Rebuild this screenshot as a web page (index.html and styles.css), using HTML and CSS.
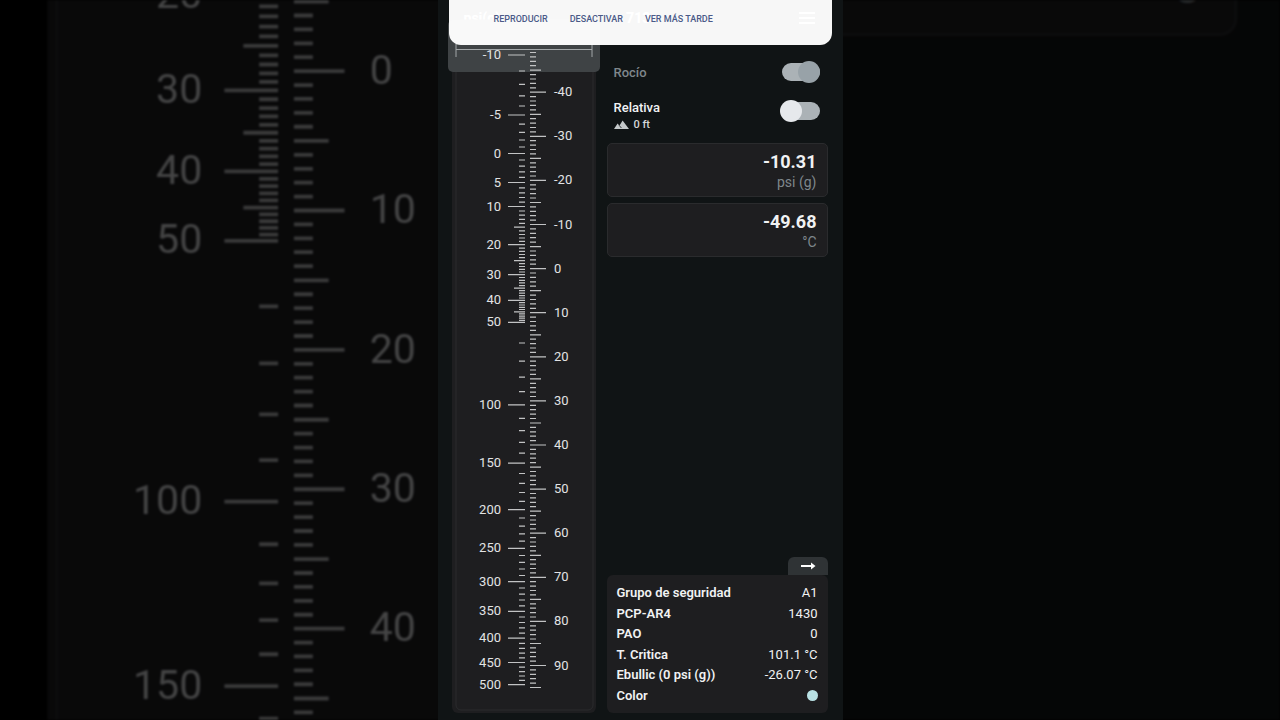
FILE: index.html
```html
<!DOCTYPE html>
<html lang="es">
<head>
  <meta charset="UTF-8" />
  <meta name="viewport" content="width=device-width, initial-scale=1.0"/>
  <title>Regla de refrigerante</title>
  <link rel="stylesheet" href="styles.css">
</head>
<body>

  <svg class="backdrop" viewBox="-1 246 405 228" preserveAspectRatio="xMidYMid slice" aria-hidden="true">
    <rect class="screen-bg" x="14" width="405" height="720"/>
    <rect class="rail-bg" x="14" y="-20" width="144" height="733" rx="6"/>
    <rect class="rail-line" x="17" y="-20" width="137" height="730" rx="5"/>
    <rect class="rail-bg rail-line" x="169" y="204" width="221" height="53" rx="5"/>
    <text class="unit-text" x="379" y="247" text-anchor="end">°C</text>
    <g class="scale" transform="translate(14 0)"></g>
  </svg>

  <main class="phone">
    <header class="topbar">
      <span>psi(g)</span>
      <span>713</span>
      <svg width="16" height="12" viewBox="0 0 16 12">
        <path d="M0 1h16M0 6h16M0 11h16" stroke="#fff" stroke-width="2"/>
      </svg>
    </header>

    <div class="sheet">
      <button>REPRODUCIR</button>
      <button>DESACTIVAR</button>
      <button>VER MÁS TARDE</button>
    </div>

    <div class="content">
      <section class="rail">
        <svg class="ruler" viewBox="0 44 144 669" preserveAspectRatio="xMidYMin meet">
          <rect class="rail-line" x="4" y="20" width="137" height="690" rx="5"/>
          <rect class="cursor" x="-4" y="20" width="152" height="52" rx="5"/>
          <path class="cursor-line" d="M4 44v13M4 49.5h136M140 44v13"/>
          <g class="scale"></g>
        </svg>
      </section>

      <section class="panel">
        <div class="option option-off">
          <label for="rocio">Rocío</label>
          <input class="switch" type="checkbox" id="rocio" checked disabled>
        </div>
        <div class="option">
          <div>
            <label for="relativa">Relativa</label>
            <div class="altitude">
              <svg width="15" height="9" viewBox="0 0 15 9">
                <path d="M0 9L3.6 3.4 5.4 5.8 8.6 0.5 15 9Z" fill="#c4c8ca"/>
                <path d="M5.2 5.4L7.4 8" stroke="#101415" stroke-width="0.8"/>
              </svg>
              <span>0 ft</span>
            </div>
          </div>
          <input class="switch" type="checkbox" id="relativa">
        </div>

        <div class="reading">
          <strong>-10.31</strong>
          <span>psi (g)</span>
        </div>
        <div class="reading">
          <strong>-49.68</strong>
          <span>°C</span>
        </div>

        <div class="info">
          <button class="info-tab" aria-label="Siguiente">
            <svg width="16" height="8" viewBox="0 0 16 8">
              <path d="M1 4h12" stroke="#fff" stroke-width="2"/>
              <path d="M11 0.5L15.5 4 11 7.5Z" fill="#fff"/>
            </svg>
          </button>
          <dl class="info-list">
            <div><dt>Grupo de seguridad</dt><dd>A1</dd></div>
            <div><dt>PCP-AR4</dt><dd>1430</dd></div>
            <div><dt>PAO</dt><dd>0</dd></div>
            <div><dt>T. Critica</dt><dd>101.1 °C</dd></div>
            <div><dt>Ebullic (0 psi (g))</dt><dd>-26.07 °C</dd></div>
            <div><dt>Color</dt><dd><span class="swatch"></span></dd></div>
          </dl>
        </div>
      </section>
    </div>
  </main>

  <script src="script.js"></script>
</body>
</html>
```
FILE: styles.css
```css
:root {
  --screen: #101415;
  --card: #1e1e20;
  --line: #2a2b2d;
  --text: #f1f2f3;
  --muted: #7f878c;
}

* {
  box-sizing: border-box;
}

body {
  margin: 0;
  height: 100vh;
  overflow: hidden;
  display: flex;
  justify-content: center;
  background: #000;
  color: var(--text);
  font-family: Roboto, sans-serif;
  font-size: 13px;
}

button {
  border: none;
  padding: 0;
  font-family: inherit;
  cursor: pointer;
}

/* enlarged, dimmed copy of the ruler behind the phone */
.backdrop {
  position: absolute;
  inset: 0;
  width: 100%;
  height: 100%;
  opacity: 0.3;
  filter: blur(1px);
}

.screen-bg {
  fill: #131414;
}

.rail-bg {
  fill: var(--card);
}

.rail-line {
  stroke: var(--line);
}

.rail-line:not(.rail-bg) {
  fill: none;
}

.unit-text {
  fill: var(--muted);
  font-size: 14px;
}

.phone {
  position: relative;
  height: 100vh;
  aspect-ratio: 9 / 16;
  display: flex;
  flex-direction: column;
  background: var(--screen);
}

.topbar {
  flex: 0 0 44px;
  display: flex;
  align-items: center;
  gap: 126px;
  padding: 0 28px 8px 26px;
  color: #fff;
  font-size: 14px;
  font-weight: bold;
}

.topbar svg {
  margin-left: auto;
}

.sheet {
  position: absolute;
  top: 0;
  left: 11px;
  right: 11px;
  z-index: 1;
  height: 45px;
  display: flex;
  align-items: center;
  gap: 22px;
  padding: 0 45px 8px;
  border-radius: 0 0 12px 12px;
  background: rgba(255, 255, 255, 0.97);
}

.sheet button {
  background: none;
  color: #4a5a88;
  font-size: 9px;
  font-weight: 500;
}

.content {
  flex: 1;
  min-height: 0;
  display: grid;
  grid-template-columns: 144fr 221fr;
  gap: 11px;
  padding: 0 15px 7px 14px;
}

.rail {
  min-height: 0;
  border-radius: 0 0 6px 6px;
  background: var(--card);
}

.ruler {
  display: block;
  width: 100%;
  height: 100%;
  overflow: visible;
}

.cursor {
  fill: #3f4345;
}

.cursor-line {
  fill: none;
  stroke: #a3a7a9;
}

.scale path {
  fill: none;
  stroke: #c2c3c4;
  stroke-width: 1.2;
}

.scale text {
  fill: #e2e3e4;
  font-family: Roboto, sans-serif;
  font-size: 13px;
}

.panel {
  display: flex;
  flex-direction: column;
  min-height: 0;
}

.option {
  display: flex;
  align-items: flex-start;
  justify-content: space-between;
  height: 37px;
  padding: 0 8px 0 7px;
  font-weight: 500;
  line-height: 15px;
}

.option label {
  display: block;
}

.option-off {
  align-items: center;
  height: 56px;
  color: var(--muted);
}

.altitude {
  display: flex;
  align-items: center;
  gap: 5px;
  margin-top: 3px;
  font-size: 11px;
  line-height: 13px;
  color: #d5d7d8;
}

.switch {
  appearance: none;
  display: grid;
  align-items: center;
  width: 40px;
  height: 22px;
  margin: 0;
}

.switch::before,
.switch::after {
  content: "";
  grid-area: 1 / 1;
}

.switch::before {
  height: 18px;
  margin-left: 2px;
  border-radius: 9px;
  background: #abb2b6;
}

.switch::after {
  width: 22px;
  height: 22px;
  border-radius: 50%;
  background: #e6e9ec;
}

.switch:checked::after {
  justify-self: end;
  background: #98a2a8;
}

.reading {
  display: flex;
  flex-direction: column;
  align-items: flex-end;
  height: 54px;
  padding: 8px 10px;
  margin-top: 6px;
  border: 1px solid var(--line);
  border-radius: 5px;
  background: var(--card);
}

.reading strong {
  font-size: 18px;
  line-height: 20px;
}

.reading span {
  font-size: 14px;
  line-height: 20px;
  color: var(--muted);
}

.info {
  display: flex;
  flex-direction: column;
  margin-top: auto;
}

.info-tab {
  align-self: flex-end;
  display: flex;
  align-items: center;
  justify-content: center;
  width: 40px;
  height: 18px;
  border-radius: 6px 6px 0 0;
  background: #2f3335;
}

.info-list {
  display: grid;
  align-content: space-between;
  min-height: 138px;
  margin: 0;
  padding: 10px;
  border-radius: 6px;
  background: var(--card);
}

.info-list div {
  display: flex;
  align-items: center;
  justify-content: space-between;
  line-height: 15px;
}

.info-list dt {
  font-weight: 600;
}

.info-list dd {
  margin: 0;
}

.swatch {
  display: block;
  width: 11px;
  height: 11px;
  border-radius: 50%;
  background: #b9e1e4;
}
```
FILE: script.js
```javascript
// known points of the pressure scale: [psi (g), y]
const points = [
  [-10, 55], [-5, 115], [0, 153.5], [5, 182.5], [10, 206.5], [20, 244.7],
  [30, 274.7], [40, 300.3], [50, 322.3], [100, 404.8], [150, 463.2],
  [200, 509.6], [250, 548.3], [300, 581.7], [350, 611.4], [400, 638.2],
  [450, 662.5], [500, 684.6]
];

// between two points the scale is linear in the log of absolute pressure
function pressureY(p) {
  const log = (v) => Math.log(v + 14.696);
  let i = 0;
  while (i < points.length - 2 && p > points[i + 1][0]) i++;
  const [p0, y0] = points[i];
  const [p1, y1] = points[i + 1];
  return y0 + (y1 - y0) * (log(p) - log(p0)) / (log(p1) - log(p0));
}

function temperatureY(t) {
  return 268.6 + t * 4.41;
}

function label(x, y, value, anchor) {
  return `<text x="${x}" y="${y + 4}" text-anchor="${anchor}">${value}</text>`;
}

function buildScale() {
  let ticks = '';
  let labels = '';

  for (let p = -10; p <= 500; p += p < 50 ? 1 : 10) {
    const y = pressureY(p);
    const major = points.some((point) => point[0] === p);
    const length = major ? 17 : (p > 10 && p < 50 && p % 5 === 0) ? 11 : 6;
    ticks += `M73 ${y.toFixed(1)}h-${length}`;
    if (major) labels += label(49, y, p, 'end');
  }

  for (let t = -49; t <= 95; t++) {
    const y = temperatureY(t);
    const length = t % 10 === 0 ? 16 : t % 5 === 0 ? 11 : 6;
    ticks += `M78 ${y.toFixed(1)}h${length}`;
    if (t % 10 === 0) labels += label(102, y, t, 'start');
  }

  return `<path d="${ticks}"/>${labels}`;
}

document.querySelectorAll('.scale').forEach((group) => {
  group.innerHTML = buildScale();
});
```
